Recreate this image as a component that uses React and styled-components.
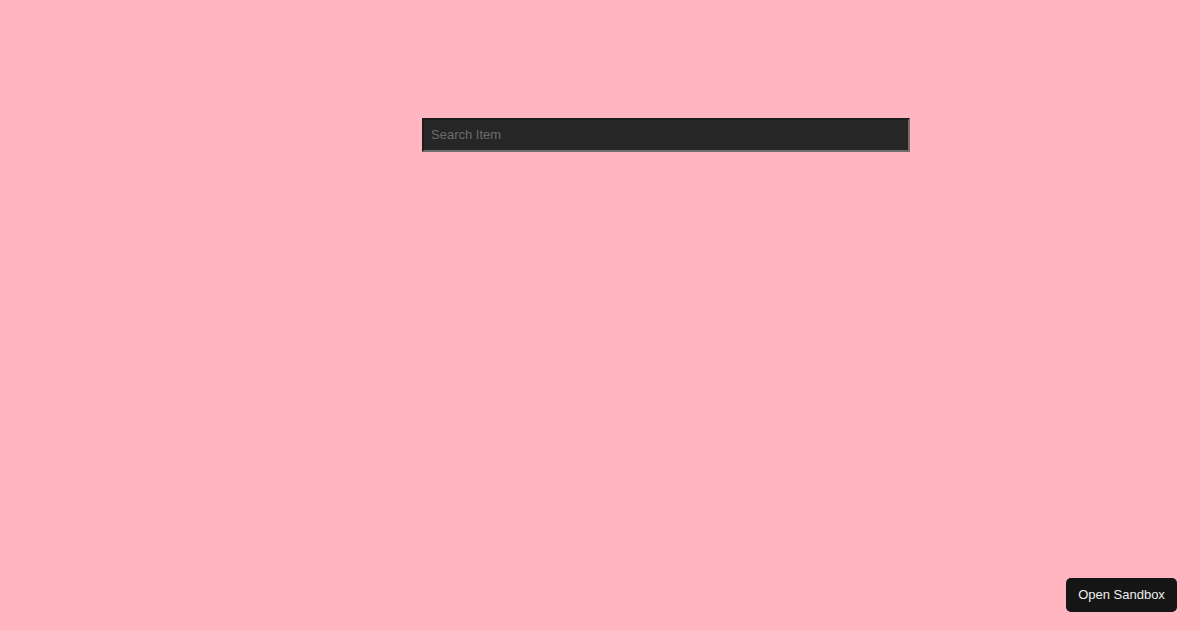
import styled, { createGlobalStyle } from 'styled-components';

const GlobalStyle = createGlobalStyle`
  html, body {
    margin: 0;
    padding: 0;
    background: #ffb6c1;
    font-family: "Liberation Sans", Arial, sans-serif;
  }
`;

const Page = styled.div`
  min-height: 630px;
  background: #ffb6c1;
  box-sizing: border-box;
  padding: 118px 0 0 422px;
`;

const SearchInput = styled.input`
  display: block;
  width: 488px;
  height: 34px;
  box-sizing: border-box;
  padding: 0 7px 2px;
  background: #262626;
  color: #ddd;
  font-family: "Liberation Sans", Arial, sans-serif;
  font-size: 13px;
  border-style: solid;
  border-width: 2px;
  border-color: #1c1c1c #6f6f6f #6f6f6f #1c1c1c;
  outline: none;

  &::placeholder {
    color: #6c6c6c;
  }
`;

const SandboxButton = styled.button`
  position: fixed;
  right: 23px;
  bottom: 18px;
  width: 111px;
  height: 34px;
  padding: 0 0 2px;
  border: none;
  border-radius: 5px;
  background: #151515;
  color: #eee;
  font-family: "Liberation Sans", Arial, sans-serif;
  font-size: 13px;
  cursor: pointer;
`;

const App = () => {
  return (
    <Page>
      <GlobalStyle />
      <SearchInput placeholder="Search Item" />
      <SandboxButton>Open Sandbox</SandboxButton>
    </Page>
  );
};

export default App;
